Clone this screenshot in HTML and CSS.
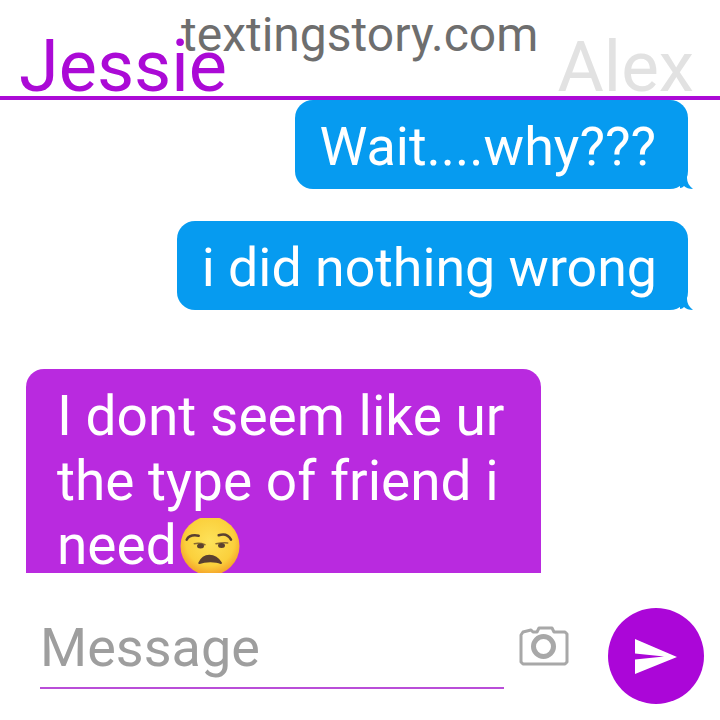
FILE: index.html
```html
<!DOCTYPE html>
<html>
	<head>
		<meta charset="utf-8">
		<meta name="viewport" content="width=device-width, initial-scale=1">
		<title>textingstory</title>
		<link rel="stylesheet" href="styles.css">
	</head>
	<body>
		<div class="screen">
			<div class="header">
				<span class="name active">Jessie</span>
				<span class="name other">Alex</span>
				<div class="watermark">textingstory.com</div>
			</div>
			<div class="messages">
				<div class="bubble sent first">
					Wait....why???
					<svg class="tail" width="14" height="14" viewBox="0 0 14 14"><path d="M0 0H7V3C7 7 9 11 13 14C9 14 6 13 4 11C3 12 1.500 13 0 13Z"/></svg>
				</div>
				<div class="bubble sent second">
					i did nothing wrong
					<svg class="tail" width="14" height="14" viewBox="0 0 14 14"><path d="M0 0H7V3C7 7 9 11 13 14C9 14 6 13 4 11C3 12 1.500 13 0 13Z"/></svg>
				</div>
				<div class="bubble received">
					I dont seem like ur the type of friend i need<svg class="emoji" width="60" height="58" viewBox="0 0 60 58">
						<defs>
							<radialGradient id="face" cx="50%" cy="42%" r="55%">
								<stop offset="0" stop-color="#fde25a"/>
								<stop offset="0.75" stop-color="#fbd03c"/>
								<stop offset="1" stop-color="#f6a92c"/>
							</radialGradient>
						</defs>
						<circle cx="30" cy="28" r="29.500" fill="url(#face)"/>
						<path d="M6.700 21.700C8.500 18 12 16.500 18.700 17.700" class="brow"/>
						<path d="M38.700 17.300C44 15.500 48.500 17 51 21.700" class="brow"/>
						<path d="M14.300 25.700C18 25 22 25.500 25 26.700" class="lid"/>
						<path d="M36 25.700C40 25 44 24.500 47.700 25" class="lid"/>
						<ellipse cx="20.500" cy="28" rx="3.500" ry="2.500" class="eye"/>
						<ellipse cx="41.500" cy="27.500" rx="3.500" ry="2.500" class="eye"/>
						<path d="M19.300 45C22 39 25 37.700 29.300 37.700C34 37.700 38 40 41 45C36 42.500 25 42.500 19.300 45Z" class="mouth"/>
					</svg>
				</div>
			</div>
			<div class="composer">
				<div class="input">
					<span class="placeholder">Message</span>
					<svg class="camera" width="50" height="40" viewBox="0 0 50 40">
						<path d="M2 36V9L4 6 12 4 14 6H18L20 2H33L35 6H46L48 8V36L46 38H4Z"/>
						<circle cx="24.500" cy="20.500" r="10"/>
					</svg>
				</div>
				<div class="send">
					<svg width="42" height="35" viewBox="0 0 42 35"><path d="M0 0L42 18 0 35V20.500L29 17.500 0 14.500Z"/></svg>
				</div>
			</div>
		</div>
	</body>
</html>
```

FILE: styles.css
```css
body{
	margin: 0;
	background: #fff;
	font-family: Roboto, sans-serif;
}
.screen{
	width: 720px;
	height: 720px;
	overflow: hidden;
}
.header{
	position: relative;
	height: 96px;
	display: flex;
	justify-content: space-between;
	align-items: flex-end;
	padding: 0 26px 0 19px;
	border-bottom: 4px solid #ab0ad6;
}
.name{
	font-size: 72px;
	line-height: 58px;
	color: #ab0ad6;
}
.name.other{
	font-size: 71px;
	color: #e2e2e2;
}
.watermark{
	position: absolute;
	top: 9px;
	left: 181px;
	font-size: 48px;
	line-height: 52px;
	color: #6e6e6e;
}
.messages{
	height: 473px;
	display: flex;
	flex-direction: column;
}
.bubble{
	flex-shrink: 0;
	box-sizing: border-box;
	color: #fff;
	border-radius: 18px;
}
.sent{
	position: relative;
	align-self: flex-end;
	margin-right: 32px;
	height: 89px;
	padding: 14px 32px 0 24px;
	font-size: 54px;
	line-height: 65px;
	background: #069bf0;
	white-space: nowrap;
}
.second{
	margin-top: 32px;
	padding: 14px 31px 0 25px;
	font-size: 53.700px;
}
.tail{
	position: absolute;
	right: -6px;
	bottom: 0;
	fill: #069bf0;
}
.received{
	margin: 59px 0 0 26px;
	width: 515px;
	height: 225px;
	padding: 15px 32px 0 31px;
	font-size: 55px;
	line-height: 64.500px;
	background: #b92adf;
}
.emoji{
	vertical-align: -12px;
	margin-left: 3px;
}
.brow{
	fill: none;
	stroke: #5a4030;
	stroke-width: 2.500;
	stroke-linecap: round;
}
.lid{
	fill: none;
	stroke: #8a6a30;
	stroke-width: 1.500;
	stroke-linecap: round;
}
.eye{
	fill: #5a4030;
}
.mouth{
	fill: #5a4030;
	stroke: #5a4030;
	stroke-width: 2;
	stroke-linejoin: round;
}
.composer{
	position: relative;
	height: 147px;
	display: flex;
	align-items: flex-start;
	padding: 35px 16px 0 40px;
	box-sizing: border-box;
	background: #fff;
}
.input{
	width: 464px;
	height: 79px;
	display: flex;
	border-bottom: 2px solid #b94ed8;
	position: relative;
}
.placeholder{
	font-size: 54px;
	line-height: 80px;
	color: #9e9e9e;
}
.camera{
	position: absolute;
	left: 479px;
	top: 18px;
	fill: none;
	stroke: #a8a8a8;
	stroke-width: 3;
	stroke-linejoin: round;
}
.camera circle{
	stroke-width: 5;
}
.send{
	width: 96px;
	height: 96px;
	margin: 0 0 0 auto;
	border-radius: 50%;
	background: #ab06d8;
	display: flex;
	align-items: center;
	justify-content: center;
}
.send svg{
	fill: #fff;
}
```
